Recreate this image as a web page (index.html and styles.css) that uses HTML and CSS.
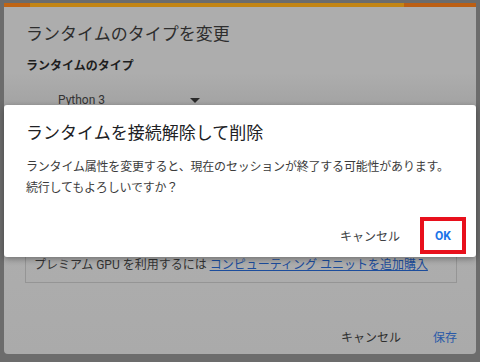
FILE: index.html
```html
<!DOCTYPE html>
<html lang="ja">
<head>
  <meta charset="UTF-8" />
  <title>ランタイムのタイプを変更</title>
  <link rel="stylesheet" href="styles.css">
</head>
<body>

<div class="stage">
  <div class="settings-dialog">
    <div class="progress">
      <span class="seg seg-left"></span>
      <span class="seg seg-mid"></span>
      <span class="seg seg-right"></span>
    </div>
    <h2 class="dialog-title">ランタイムのタイプを変更</h2>
    <div class="field-label">ランタイムのタイプ</div>
    <div class="select">
      <span>Python 3</span>
      <span class="caret"></span>
    </div>
    <div class="gpu-box">
      プレミアム GPU を利用するには <a href="#">コンピューティング ユニットを追加購入</a>
    </div>
    <div class="actions">
      <button class="btn">キャンセル</button>
      <button class="btn btn-primary">保存</button>
    </div>
  </div>

  <div class="confirm-dialog">
    <h2 class="confirm-title">ランタイムを接続解除して削除</h2>
    <p class="confirm-text">ランタイム属性を変更すると、現在のセッションが終了する可能性があります。<br>続行してもよろしいですか？</p>
    <div class="confirm-actions">
      <button class="btn">キャンセル</button>
      <button class="btn btn-ok">OK</button>
    </div>
  </div>
</div>

</body>
</html>
```

FILE: styles.css
```css
body {
  margin: 0;
  background: #6c6c6c;
  font-family: Roboto, "Noto Sans CJK JP", sans-serif;
}

.stage {
  position: relative;
  width: 480px;
  height: 362px;
  overflow: hidden;
}

button {
  font-family: inherit;
  background: none;
  border: none;
  padding: 0;
  cursor: pointer;
}

/* dimmed settings dialog behind */
.settings-dialog {
  margin: 3px 4px 0 4px;
  height: 351px;
  background: linear-gradient(to bottom, #adadad 0%, #adadad 20%, #a3a3a3 29%, #adadad 70%, #aaaaaa 100%);
  border-radius: 0 0 4px 4px;
  display: flex;
  flex-direction: column;
}

.progress {
  display: flex;
  height: 4px;
}

.seg-left {
  width: 26px;
  background: #bf6516;
}

.seg-mid {
  flex-grow: 1;
  background: #c38514;
}

.seg-right {
  width: 72px;
  background: #bc5f14;
}

.dialog-title {
  margin: 15px 0 0 22px;
  font-size: 17px;
  line-height: 24px;
  font-weight: 400;
  color: #2e2e2e;
}

.field-label {
  margin: 11px 0 0 22px;
  font-size: 12px;
  line-height: 18px;
  font-weight: 700;
  color: #1e1e1e;
}

.select {
  display: flex;
  align-items: center;
  width: 142px;
  margin: 16px 0 0 54px;
  font-size: 12px;
  line-height: 18px;
  color: #333;
  justify-content: space-between;
}

.caret {
  width: 0;
  height: 0;
  border-left: 5px solid transparent;
  border-right: 5px solid transparent;
  border-top: 5px solid #2a2a2a;
}

.gpu-box {
  margin: 142px 0 0 21px;
  width: 414px;
  padding: 5px 8px 8px 8px;
  border: 1px solid #959595;
  border-top: none;
  font-size: 12px;
  line-height: 18px;
  color: #333;
}

.gpu-box a {
  color: #1c4d9c;
}

.actions {
  display: flex;
  justify-content: flex-end;
  gap: 32px;
  margin: 46px 19px 0 0;
}

.actions .btn {
  color: #2e2e2e;
  font-size: 12px;
  line-height: 18px;
}

.actions .btn-primary {
  color: #2a5aa8;
}

/* confirm dialog on top */
.confirm-dialog {
  position: absolute;
  top: 105px;
  left: 4px;
  width: 472px;
  height: 152px;
  background: #fff;
  border-radius: 3px;
  box-shadow: 0 2px 6px rgba(0, 0, 0, 0.35);
  box-sizing: border-box;
  padding: 16px 10px 0 22px;
}

.confirm-title {
  margin: 0;
  font-size: 17px;
  line-height: 24px;
  font-weight: 400;
  color: #202124;
}

.confirm-text {
  margin: 12px 0 0 0;
  font-size: 12px;
  line-height: 21px;
  color: #3c3c3c;
  letter-spacing: -0.2px;
}

.confirm-actions {
  display: flex;
  justify-content: flex-end;
  align-items: center;
  gap: 20px;
  margin-top: 18px;
}

.confirm-actions .btn {
  font-size: 12px;
  color: #3c4043;
}

.confirm-actions .btn-ok {
  width: 46px;
  height: 37px;
  box-sizing: border-box;
  border: 4px solid #e8101c;
  color: #1a73e8;
  font-weight: 700;
  font-size: 12px;
}
```
